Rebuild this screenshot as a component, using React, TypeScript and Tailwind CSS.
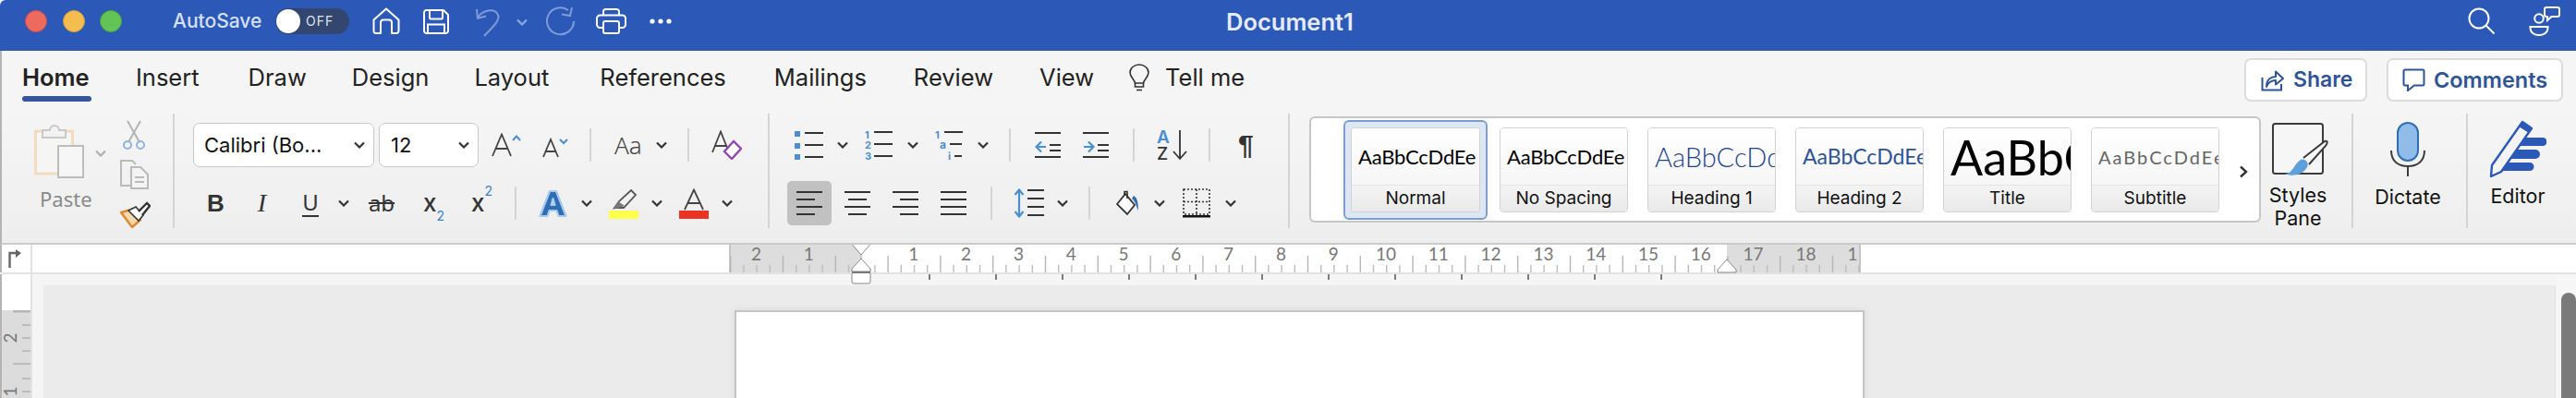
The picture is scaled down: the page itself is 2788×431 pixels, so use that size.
import React from "react";

const Chev = ({ className = "", color = "#333" }: { className?: string; color?: string }) => (
  <svg width="12" height="8" viewBox="0 0 12 8" className={`shrink-0 ${className}`}>
    <path d="M1 1.5 L6 6.5 L11 1.5" fill="none" stroke={color} strokeWidth="2.2" />
  </svg>
);

const Divider = ({ className = "" }: { className?: string }) => (
  <div className={`w-[2px] shrink-0 bg-[#d4d4d4] ${className}`} />
);

const Svg = ({ w, h, className = "", children }: { w: number; h: number; className?: string; children: React.ReactNode }) => (
  <svg width={w} height={h} viewBox={`0 0 ${w} ${h}`} className={`shrink-0 ${className}`} fill="none">
    {children}
  </svg>
);

const TitleBar = () => (
  <div className="h-[55px] shrink-0 bg-[#2c59b8] flex items-center relative rounded-tl-[6px] font-['Inter',sans-serif]">
    <div className="w-[24px] h-[24px] rounded-full bg-[#ee6a5f] border border-[#c9504a] ml-[27px] -mt-[9px]" />
    <div className="w-[24px] h-[24px] rounded-full bg-[#f5bd4f] border border-[#d19c3a] ml-[17px] -mt-[9px]" />
    <div className="w-[24px] h-[24px] rounded-full bg-[#61c454] border border-[#4ba43f] ml-[16px] -mt-[9px]" />
    <span className="ml-[55px] w-[99px] text-[21px] font-medium text-[#d6e0f5] whitespace-nowrap leading-[26px] -mt-[9px]">AutoSave</span>
    <div className="ml-[12px] w-[80px] h-[28px] rounded-full bg-[#33466f] flex items-center -mt-[9px]">
      <div className="w-[26px] h-[26px] rounded-full bg-white ml-[1px]" />
      <span className="ml-[6px] text-[14px] font-normal tracking-[1px] text-[#dfe4ee] leading-none">OFF</span>
    </div>
    <Svg w={30} h={30} className="ml-[25px] -mt-[9px]">
      <path d="M1.5 13.5 L15 1.5 L28.5 13.5 V25.5 a2.5 2.5 0 0 1-2.5 2.5 H21 V16.5 a3 3 0 0 0-3-3 h-6 a3 3 0 0 0-3 3 V28 H4 a2.5 2.5 0 0 1-2.5-2.5 Z" stroke="#fff" strokeWidth="2" strokeLinejoin="round" />
    </Svg>
    <Svg w={28} h={27} className="ml-[25px] -mt-[9px]">
      <path d="M3.5 1 H22 L27 6 V23.5 a2.5 2.5 0 0 1-2.5 2.5 H3.5 A2.5 2.5 0 0 1 1 23.5 V3.5 A2.5 2.5 0 0 1 3.5 1 Z" stroke="#fff" strokeWidth="2" />
      <path d="M7 1 V9 a1.5 1.5 0 0 0 1.5 1.5 H19.5 A1.5 1.5 0 0 0 21 9 V1" stroke="#fff" strokeWidth="2" />
      <path d="M5 26 V16.5 H23 V26" stroke="#fff" strokeWidth="2" />
    </Svg>
    <Svg w={28} h={32} className="ml-[28px] -mt-[8px]">
      <path d="M3 12 L2 2 M2 12 L12 9.5" stroke="#7f9bd7" strokeWidth="2" />
      <path d="M3 11 C8 3 21 0 25 8 C28 15 16 24 10 31" stroke="#7f9bd7" strokeWidth="2" />
    </Svg>
    <Chev color="#8fa8de" className="ml-[17px] -mt-[8px]" />
    <Svg w={34} h={32} className="ml-[19px] -mt-[9px]">
      <path d="M25 4 A14.5 14.5 0 1 0 31 16" stroke="#7f9bd7" strokeWidth="2" />
      <path d="M29 1 L27 10 L18 8.5" stroke="#7f9bd7" strokeWidth="2" />
    </Svg>
    <Svg w={33} h={28} className="ml-[21px] -mt-[9px]">
      <path d="M8 8 V3.5 A2.5 2.5 0 0 1 10.5 1 H22.5 A2.5 2.5 0 0 1 25 3.5 V8" stroke="#fff" strokeWidth="2" />
      <path d="M8 21 H4.5 A3.5 3.5 0 0 1 1 17.5 V11 A3.5 3.5 0 0 1 4.5 7.5 H28.5 A3.5 3.5 0 0 1 32 11 V17.5 A3.5 3.5 0 0 1 28.5 21 H25" stroke="#fff" strokeWidth="2" />
      <rect x="8" y="14" width="17" height="13" rx="2" stroke="#fff" strokeWidth="2" />
    </Svg>
    <Svg w={26} h={6} className="ml-[24px] -mt-[9px]">
      <circle cx="4" cy="3" r="2.6" fill="#fff" />
      <circle cx="13" cy="3" r="2.6" fill="#fff" />
      <circle cx="22" cy="3" r="2.6" fill="#fff" />
    </Svg>
    <span className="absolute left-[1327px] top-[8px] text-[25.5px] leading-[32px] font-semibold text-[#e5ebf8]">Document1</span>
    <div className="ml-auto flex items-center">
      <Svg w={30} h={30} className="-mt-[9px]">
        <circle cx="12" cy="12" r="10.5" stroke="#fff" strokeWidth="2" />
        <path d="M19.5 19.5 L28.5 28.5" stroke="#fff" strokeWidth="2" />
      </Svg>
      <Svg w={34} h={32} className="ml-[36px] mr-[17px] -mt-[9px]">
        <circle cx="11" cy="13" r="4.8" stroke="#fff" strokeWidth="2" />
        <path d="M1.5 22 H20.5 V23.5 A8.5 7.5 0 0 1 12 31 H10 A8.5 7.5 0 0 1 1.5 23.5 Z" stroke="#fff" strokeWidth="2" />
        <path d="M19 1 H31 A2 2 0 0 1 33 3 V9 A2 2 0 0 1 31 11 H24.5 L20 15 V11 H19 A2 2 0 0 1 17 9 V3 A2 2 0 0 1 19 1 Z" stroke="#fff" strokeWidth="2" />
      </Svg>
    </div>
  </div>
);

const Tab = ({ label, className = "", active = false }: { label: string; className?: string; active?: boolean }) => (
  <div className={`relative text-[25.5px] leading-[32px] whitespace-nowrap text-[#222] ${active ? "font-semibold" : "font-normal"} ${className}`}>
    {label}
    {active && <div className="absolute left-0 right-0 top-[36px] h-[6px] rounded-full bg-[#36569c]" />}
  </div>
);

const TabRow = () => (
  <div className="h-[67px] shrink-0 flex items-start bg-[#f5f5f5] font-['Inter',sans-serif] border-l-2 border-[#b4b4b4]">
    <div className="flex items-center mt-[13px] ml-[22px]">
      <Tab label="Home" active className="w-[75px]" />
      <Tab label="Insert" className="ml-[48px]" />
      <Tab label="Draw" className="ml-[53px]" />
      <Tab label="Design" className="ml-[49px]" />
      <Tab label="Layout" className="ml-[49px]" />
      <Tab label="References" className="ml-[55px]" />
      <Tab label="Mailings" className="ml-[52px]" />
      <Tab label="Review" className="ml-[51px]" />
      <Tab label="View" className="ml-[50px]" />
      <Svg w={24} h={31} className="ml-[37px]">
        <path d="M7.5 21 C7 17 2 14.5 2 9.5 A10 8.5 0 0 1 22 9.5 C22 14.5 17 17 16.5 21 Z" stroke="#333" strokeWidth="1.6" />
        <path d="M7.5 21 V25 H16.5 V21 M9 28.5 H15" stroke="#333" strokeWidth="1.6" />
      </Svg>
      <Tab label="Tell me" className="ml-[16px]" />
    </div>
    <div className="ml-auto flex mt-[8px] mr-[14px] text-[#2f5496]">
      <div className="w-[133px] h-[47px] rounded-[7px] border-2 border-[#dcdcdc] bg-white flex items-center">
        <Svg w={25} h={25} className="ml-[16px]">
          <path d="M1.5 10 V23.5 H22 V17" stroke="#2f5496" strokeWidth="2" />
          <path d="M6 20 C6 12 11 9 16 9 V3.5 L24 11 L16 17.5 V13 C12 13 8 15 6 20 Z" stroke="#2f5496" strokeWidth="2" strokeLinejoin="round" />
        </Svg>
        <span className="ml-[10px] text-[23px] font-semibold leading-none">Share</span>
      </div>
      <div className="ml-[21px] w-[191px] h-[47px] rounded-[7px] border-2 border-[#dcdcdc] bg-white flex items-center">
        <Svg w={25} h={25} className="ml-[15px]">
          <path d="M3 1.5 H22 A1.5 1.5 0 0 1 23.5 3 V17 A1.5 1.5 0 0 1 22 18.5 H13 L6 24 V18.5 H3 A1.5 1.5 0 0 1 1.5 17 V3 A1.5 1.5 0 0 1 3 1.5 Z" stroke="#2f5496" strokeWidth="2" />
        </Svg>
        <span className="ml-[9px] text-[23.5px] font-semibold leading-none">Comments</span>
      </div>
    </div>
  </div>
);

const Lines = ({ kind, className = "" }: { kind: "left" | "center" | "right" | "just"; className?: string }) => {
  const rows: [number, number][] =
    kind === "left"
      ? [[0, 28], [0, 20], [0, 28], [0, 20]]
      : kind === "center"
      ? [[0, 28], [4, 24], [0, 28], [4, 24]]
      : kind === "right"
      ? [[0, 28], [8, 28], [0, 28], [8, 28]]
      : [[0, 28], [0, 28], [0, 28], [0, 28]];
  return (
    <Svg w={28} h={28} className={className}>
      {rows.map(([a, b], i) => (
        <rect key={i} x={a} y={1 + i * 8} width={b - a} height="2" fill="#333" />
      ))}
    </Svg>
  );
};

const Clipboard = () => (
  <div className="w-[185px] h-[124px] shrink-0 flex relative">
    <div className="w-[117px] shrink-0">
      <div className="h-[61px] mt-[10px] flex">
        <Svg w={56} h={62} className="ml-[35px]">
          <rect x="1.5" y="9" width="40" height="46" fill="#f5f5f4" stroke="#f2dcc0" strokeWidth="3" />
          <path d="M9 16 V8 H17 A5 5 0 0 1 27 8 H34 V16 Z" fill="#f2f2f2" stroke="#c9c9c9" strokeWidth="2" />
          <rect x="26" y="25" width="27" height="34" fill="#f6f6f6" stroke="#bdbdbd" strokeWidth="2" />
        </Svg>
        <Chev color="#b0b0b0" className="ml-[10px] mt-[29px]" />
      </div>
      <div className="mt-[7px] ml-[41px] text-[22px] leading-[28px] text-[#8a8a8a]">Paste</div>
    </div>
    <div className="ml-[10px] flex flex-col items-start">
      <Svg w={26} h={32} className="mt-[7px] ml-[3px]">
        <path d="M6 1 L19 24 M20 1 L7 24" stroke="#b4b4b4" strokeWidth="2" />
        <circle cx="6" cy="27" r="4" stroke="#8fb5de" strokeWidth="2" />
        <circle cx="20" cy="27" r="4" stroke="#8fb5de" strokeWidth="2" />
      </Svg>
      <Svg w={32} h={33} className="mt-[10px]">
        <path d="M12 29 H2 V2 H14 L18 6" stroke="#bababa" strokeWidth="2" />
        <path d="M13 9 H23 L31 17 V32 H13 Z" fill="#f4f4f4" stroke="#bababa" strokeWidth="2" />
        <path d="M17 20 H27 M17 25 H27" stroke="#bababa" strokeWidth="2" />
      </Svg>
      <Svg w={34} h={32} className="mt-[11px]">
        <path d="M2 14 L17 10 L23 22 L14 30 Z" fill="#f5d9ae" stroke="#e08a33" strokeWidth="2.5" strokeLinejoin="round" />
        <path d="M10 12 L21 23 L26 17 L18 8 Z" fill="#fff" stroke="#333" strokeWidth="1.6" />
        <path d="M21 13 L30 4 L33 7 L25 17" fill="#fff" stroke="#333" strokeWidth="2.4" />
      </Svg>
    </div>
  </div>
);

const FontGroup = () => (
  <div className="w-[622px] shrink-0 pt-[10px] ml-[20px] font-['Inter',sans-serif] text-[#222]">
    <div className="h-[48px] flex items-center">
      <div className="w-[196px] h-[48px] rounded-[7px] border border-[#c9c9c9] bg-white flex items-center pl-[11px] pr-[9px]">
        <span className="text-[22px] whitespace-nowrap text-[#111]">Calibri (Bo...</span>
        <Chev className="ml-auto" />
      </div>
      <div className="ml-[5px] w-[108px] h-[48px] rounded-[7px] border border-[#c9c9c9] bg-white flex items-center pl-[12px] pr-[9px]">
        <span className="text-[22px] text-[#111]">12</span>
        <Chev className="ml-auto" />
      </div>
      <Svg w={32} h={26} className="ml-[14px]">
        <path d="M1 25 L11 1.5 L21 25 M4.5 17 H17.5" stroke="#444" strokeWidth="1.8" />
        <path d="M23 8 L27 3.5 L31 8" stroke="#4a8fd0" strokeWidth="2" />
      </Svg>
      <Svg w={28} h={22} className="ml-[23px] mt-[5px]">
        <path d="M1 21 L9 2 L17 21 M4 15 H14" stroke="#444" strokeWidth="1.8" />
        <path d="M19 2 L23 6 L27 2" stroke="#4a8fd0" strokeWidth="2" />
      </Svg>
      <Divider className="ml-[23px] h-[36px]" />
      <span className="ml-[25px] w-[33px] text-[26px] font-light text-[#444] whitespace-nowrap leading-[32px] font-['Noto_Sans',sans-serif]">Aa</span>
      <Chev className="ml-[12px]" />
      <Divider className="ml-[22px] h-[36px]" />
      <Svg w={33} h={32} className="ml-[24px]">
        <path d="M1 24 L10 1.5 L19 24 M4 17 H16" stroke="#444" strokeWidth="1.8" />
        <path d="M14 23 L24 12 L32 20 L22 31 Z" fill="#fff" stroke="#8f4aae" strokeWidth="2.4" />
      </Svg>
    </div>
    <div className="h-[48px] mt-[15px] flex items-center text-[#333]">
      <span className="ml-[15px] w-[17px] text-[26px] font-bold leading-[32px] font-['Liberation_Sans',sans-serif]">B</span>
      <span className="ml-[35px] w-[15px] text-[28px] italic leading-[32px] text-center font-['Liberation_Serif',serif]">I</span>
      <span className="ml-[36px] w-[18px] text-[24px] leading-[28px] border-b-2 border-[#333] text-center font-['Noto_Sans',sans-serif]">U</span>
      <Chev className="ml-[21px]" />
      <span className="ml-[19px] w-[32px] text-[24px] leading-[30px] text-center line-through font-['Noto_Sans',sans-serif]">ab</span>
      <span className="ml-[29px] w-[22px] text-[26px] font-medium leading-[30px] whitespace-nowrap">x<sub className="text-[14px] font-normal text-[#3b82c4] align-sub">2</sub></span>
      <span className="ml-[30px] w-[22px] text-[26px] font-medium leading-[30px] whitespace-nowrap">x<sup className="text-[14px] font-normal text-[#3b82c4] align-super">2</sup></span>
      <Divider className="ml-[25px] h-[36px]" />
      <Svg w={31} h={31} className="ml-[24px]">
        <path d="M1.5 29 L12 2 H19 L29.5 29 H21.5 L19.5 23 H11.5 L9.5 29 Z M13.5 17 H17.5 L15.5 10 Z" fill="#2f6db5" stroke="#a7caea" strokeWidth="2.2" strokeLinejoin="round" />
      </Svg>
      <Chev className="ml-[15px]" />
      <div className="ml-[18px] w-[32px] flex flex-col items-center">
        <Svg w={30} h={24}>
          <path d="M5 21 H15 L28 7 L23 2 L10 14 Z" fill="#f2f2f2" stroke="#555" strokeWidth="1.8" />
          <path d="M3 23 L9 14 L16 19 Z" fill="#777" />
        </Svg>
        <div className="w-[32px] h-[9px] bg-[#ffff4d]" />
      </div>
      <Chev className="ml-[14px]" />
      <div className="ml-[18px] w-[32px] flex flex-col items-center">
        <Svg w={24} h={24}>
          <path d="M2 23 L12 1.5 L22 23 M6 16 H18" stroke="#444" strokeWidth="1.8" />
        </Svg>
        <div className="w-[32px] h-[9px] bg-[#e93323]" />
      </div>
      <Chev className="ml-[14px]" />
    </div>
  </div>
);

const ListBar = ({ y, x = 10, w = 20 }: { y: number; x?: number; w?: number }) => <rect x={x} y={y} width={w} height="2" fill="#333" />;

const NumText = ({ x, y, t, s = 11 }: { x: number; y: number; t: string; s?: number }) => (
  <text x={x} y={y} fontSize={s} fontWeight="700" fontFamily="Inter, sans-serif" fill="#4a8fd0">{t}</text>
);

const ParagraphGroup = () => (
  <div className="w-[561px] shrink-0 pt-[10px] text-[#333]">
    <div className="h-[48px] flex items-center">
      <Svg w={31} h={32} className="ml-[27px]">
        <rect x="0" y="1" width="6" height="6" fill="#4a8fd0" />
        <rect x="0" y="14" width="6" height="6" fill="#4a8fd0" />
        <rect x="0" y="26" width="6" height="6" fill="#4a8fd0" />
        <ListBar y={2} x={11} />
        <ListBar y={15} x={11} />
        <ListBar y={28} x={11} />
      </Svg>
      <Chev className="ml-[15px]" />
      <Svg w={30} h={34} className="ml-[18px]">
        <NumText x={0} y={10} t="1" />
        <NumText x={0} y={21} t="2" />
        <NumText x={0} y={33} t="3" />
        <ListBar y={2} x={10} />
        <ListBar y={15} x={10} />
        <ListBar y={28} x={10} />
      </Svg>
      <Chev className="ml-[16px]" />
      <Svg w={30} h={34} className="ml-[18px]">
        <NumText x={0} y={10} t="1" />
        <NumText x={5} y={21} t="a" s={12} />
        <NumText x={14} y={33} t="i" />
        <ListBar y={2} x={10} />
        <ListBar y={15} x={16} w={13} />
        <ListBar y={28} x={21} w={8} />
      </Svg>
      <Chev className="ml-[16px]" />
      <Divider className="ml-[22px] h-[36px]" />
      <Svg w={28} h={30} className="ml-[26px]">
        <rect x="0" y="1" width="28" height="2" fill="#333" />
        <rect x="16" y="14" width="12" height="2" fill="#333" />
        <rect x="16" y="20" width="12" height="2" fill="#333" />
        <rect x="0" y="27" width="28" height="2" fill="#333" />
        <path d="M12 18 H2 M7 12.5 L1.5 18 L7 23.5" stroke="#4a8fd0" strokeWidth="2.2" transform="translate(0 -1)" />
      </Svg>
      <Svg w={28} h={30} className="ml-[24px]">
        <rect x="0" y="1" width="28" height="2" fill="#333" />
        <rect x="16" y="14" width="12" height="2" fill="#333" />
        <rect x="16" y="20" width="12" height="2" fill="#333" />
        <rect x="0" y="27" width="28" height="2" fill="#333" />
        <path d="M1 18 H11 M6 12.5 L11.5 18 L6 23.5" stroke="#4a8fd0" strokeWidth="2.2" transform="translate(0 -1)" />
      </Svg>
      <Divider className="ml-[26px] h-[36px]" />
      <Svg w={33} h={34} className="ml-[24px]">
        <text x="0" y="15" fontSize="19" fontWeight="600" fontFamily="Inter, sans-serif" fill="#4a8fd0">A</text>
        <text x="0" y="33" fontSize="19" fontWeight="500" fontFamily="Inter, sans-serif" fill="#333">Z</text>
        <path d="M25 1 V31 M18 24 L25 32 L32 24" stroke="#333" strokeWidth="1.8" />
      </Svg>
      <Divider className="ml-[23px] h-[36px]" />
      <span className="ml-[30px] w-[20px] text-[30px] font-bold leading-[36px] font-['Liberation_Sans',sans-serif] text-[#333]">¶</span>
    </div>
    <div className="h-[48px] mt-[15px] flex items-center">
      <div className="ml-[19px] w-[48px] h-[48px] rounded-[5px] bg-[#c1c1c1] flex items-center justify-center">
        <Lines kind="left" />
      </div>
      <Lines kind="center" className="ml-[14px]" />
      <Lines kind="right" className="ml-[24px]" />
      <Lines kind="just" className="ml-[24px]" />
      <Divider className="ml-[26px] h-[36px]" />
      <Svg w={32} h={32} className="ml-[24px]">
        <path d="M5 16 V1.5 M0.5 7 L5 1.5 L9.5 7 M5 16 V30.5 M0.5 25 L5 30.5 L9.5 25" stroke="#4a8fd0" strokeWidth="2.2" />
        <rect x="14" y="1" width="18" height="2" fill="#333" />
        <rect x="14" y="10" width="18" height="2" fill="#333" />
        <rect x="14" y="19" width="18" height="2" fill="#333" />
        <rect x="14" y="28" width="18" height="2" fill="#333" />
      </Svg>
      <Chev className="ml-[14px]" />
      <Divider className="ml-[22px] h-[36px]" />
      <Svg w={25} h={28} className="ml-[28px]">
        <path d="M1 15 L10 4 L20 16 L12 26 Z" fill="#fff" stroke="#333" strokeWidth="1.8" />
        <path d="M9 5 V1.5 H12 V9" stroke="#333" strokeWidth="1.6" />
        <path d="M19 6 C23 8 24 14 24 22 C22 18 21 12 17 9 Z" fill="#2f6db5" />
      </Svg>
      <Chev className="ml-[16px]" />
      <Svg w={30} h={32} className="ml-[19px]">
        <rect x="1" y="1" width="28" height="27" stroke="#333" strokeWidth="1.6" strokeDasharray="2 2" />
        <path d="M15 1 V28 M1 14.5 H29" stroke="#333" strokeWidth="1.6" strokeDasharray="2 2" />
        <rect x="0" y="29" width="30" height="2.5" fill="#111" />
      </Svg>
      <Chev className="ml-[16px]" />
    </div>
  </div>
);

const StyleCard = ({ label, children, selected = false }: { label: string; children: React.ReactNode; selected?: boolean }) => (
  <div className={selected ? "w-[156px] h-[108px] shrink-0 rounded-[6px] border-2 border-[#7f9ccf] bg-[#dde6f3] p-[6px] mr-[13px]" : "w-[139px] h-[92px] shrink-0 ml-0 mr-[21px] mt-[8px]"}>
    <div className={`${selected ? "w-[140px] h-[92px]" : "w-[139px] h-[92px]"} rounded-[4px] border border-[#d2d2d2] flex flex-col overflow-hidden`}>
      <div className="h-[61px] shrink-0 bg-gradient-to-b from-white to-[#f6f6f6] overflow-hidden flex items-center pl-[7px] pr-[3px] whitespace-nowrap font-['Lato',sans-serif]">
        {children}
      </div>
      <div className="flex-1 bg-gradient-to-b from-[#f4f4f4] to-[#e9e9e9] border-t border-[#e4e4e4] text-center text-[19px] leading-[28px] text-[#111] font-['Inter',sans-serif]">
        {label}
      </div>
    </div>
  </div>
);

const Gallery = () => (
  <div className="ml-[21px] mt-[3px] w-[1030px] h-[115px] shrink-0 rounded-[6px] border-2 border-[#c6c6c6] bg-white flex items-start pl-[35px] pt-[2px] relative">
    <StyleCard label="Normal" selected>
      <span className="text-[22px] text-black tracking-[-0.2px]">AaBbCcDdEe</span>
    </StyleCard>
    <StyleCard label="No Spacing">
      <span className="text-[22px] text-black tracking-[-0.2px]">AaBbCcDdEe</span>
    </StyleCard>
    <StyleCard label="Heading 1">
      <span className="text-[29px] font-light text-[#1f4590]">AaBbCcDd</span>
    </StyleCard>
    <StyleCard label="Heading 2">
      <span className="text-[23px] text-[#2f5496]">AaBbCcDdEe</span>
    </StyleCard>
    <StyleCard label="Title">
      <span className="text-[52px] text-black leading-none">AaBbCc</span>
    </StyleCard>
    <StyleCard label="Subtitle">
      <span className="text-[20px] text-[#666] tracking-[2px]">AaBbCcDdEe</span>
    </StyleCard>
    <Svg w={12} h={14} className="-ml-[1px] mt-[49px]">
      <path d="M3 1.5 L9 7 L3 12.5" stroke="#333" strokeWidth="2.4" />
    </Svg>
  </div>
);

const RightTools = () => (
  <div className="flex shrink-0 text-[21.5px] leading-[25px] text-[#111] font-['Inter',sans-serif]">
    <div className="w-[80px] flex flex-col items-center mr-[18px]">
      <Svg w={62} h={60} className="mt-[10px] ml-[6px]">
        <rect x="1" y="1" width="54" height="54" rx="2.5" stroke="#3b3b3b" strokeWidth="2" fill="#f6f6f6" />
        <path d="M34 38 L57 20 C61 19 60 22 58 25 L40 45" fill="#f6f6f6" stroke="#3b3b3b" strokeWidth="2" />
        <path d="M14 55 C22 56 24 44 31 40 C35 38 41 43 38 48 C34 56 22 59 14 55 Z" fill="#5f9fdc" />
      </Svg>
      <div className="mt-[6px] text-center">Styles<br />Pane</div>
    </div>
    <Divider className="h-[124px]" />
    <div className="w-[122px] flex flex-col items-center">
      <Svg w={38} h={62} className="mt-[8px] -ml-[4px]">
        <rect x="8" y="2" width="22" height="41" rx="11" fill="#8fbce8" stroke="#2f6db5" strokeWidth="2" />
        <path d="M1 32 C1 44 9 49 19 49 C29 49 37 44 37 32" stroke="#3b3b3b" strokeWidth="2" />
        <path d="M19 49 V60" stroke="#3b3b3b" strokeWidth="2" />
      </Svg>
      <div className="mt-[8px] text-center -ml-[4px]">Dictate</div>
    </div>
    <Divider className="h-[124px]" />
    <div className="w-[108px] flex flex-col items-center">
      <Svg w={62} h={62} className="mt-[7px]">
        <path d="M32 19 H58 A4 4 0 0 1 58 28 H25 Z M26 32 H50 A4 4 0 0 1 50 42 H19 Z M18 46 H44 A4 4 0 0 1 44 55 H12 Z" fill="#2c59b8" />
        <path d="M36 2 L46 9 L13 56 L2 61 L3 49 Z" fill="#f4f4f4" stroke="#2c59b8" strokeWidth="2.4" strokeLinejoin="round" />
        <path d="M36 1 L47 9 L43 14 L32 7 Z" fill="#2c59b8" />
      </Svg>
      <div className="mt-[8px] text-center">Editor</div>
    </div>
  </div>
);

const Ribbon = () => (
  <div className="h-[143px] shrink-0 flex items-start pt-[1px] bg-gradient-to-b from-[#f5f5f5] to-[#eeeeee] border-l-2 border-b-2 border-[#b4b4b4] border-b-[#cbcbcb]">
    <Clipboard />
    <Divider className="h-[124px]" />
    <FontGroup />
    <Divider className="h-[124px]" />
    <ParagraphGroup />
    <Divider className="h-[124px]" />
    <Gallery />
    <RightTools />
  </div>
);

const HRuler = () => {
  const origin = 143;
  const unit = 56.8;
  const ticks: React.ReactNode[] = [];
  for (let i = -10; i <= 76; i++) {
    if (i === 0) continue;
    const x = origin + (i * unit) / 4;
    const tall = ((i % 4) + 4) % 4 === 2;
    ticks.push(
      <rect key={i} x={x} y={tall ? 12 : 22} width="1.4" height={tall ? 18 : 8} fill={tall ? "#b6b6b6" : "#bcbcbc"} />
    );
  }
  const nums = [-2, -1, 1, 2, 3, 4, 5, 6, 7, 8, 9, 10, 11, 12, 13, 14, 15, 16, 17, 18, 19];
  return (
    <svg width="1240" height="44" viewBox="0 0 1240 44" className="shrink-0 ml-[754px]" fill="none">
      <rect x="0" y="0" width="143" height="30" fill="#dddddd" />
      <rect x="1080" y="0" width="145" height="30" fill="#dddddd" />
      <rect x="0" y="0" width="2" height="30" fill="#c4c4c4" />
      <rect x="1223" y="0" width="2" height="30" fill="#c4c4c4" />
      {ticks}
      {nums.map((n) => {
        const x = origin + n * unit;
        const label = n === 19 ? "1" : String(Math.abs(n));
        return (
          <text key={n} x={n === 19 ? 1216 : x} y="17" fontSize="19" textAnchor="middle" fontFamily="Lato, sans-serif" fill="#777">
            {label}
          </text>
        );
      })}
      {[0, 1, 2, 3, 4, 5, 6, 7, 8, 9, 10, 11].map((i) => (
        <rect key={i} x={216 + i * 72} y="32" width="2" height="6" fill="#7c7c7c" />
      ))}
      <path d="M133.5 0 L143 11 L152.5 0" fill="#fff" stroke="#888" strokeWidth="1" />
      <path d="M143 11 V15" stroke="#bbb" strokeWidth="1.4" />
      <path d="M143 15 L153 26 V29 H133 V26 Z" fill="#fff" stroke="#888" strokeWidth="1" />
      <rect x="133" y="30" width="20" height="12" rx="2" fill="#fff" stroke="#888" strokeWidth="1" />
      <rect x="133" y="29" width="20" height="2" fill="#777" />
      <path d="M1080 16 L1090 27 V30 H1070 V27 Z" fill="#fff" stroke="#888" strokeWidth="1" />
    </svg>
  );
};

const VRuler = () => (
  <svg width="31" height="95" viewBox="0 0 31 95" className="shrink-0" fill="none">
    <rect x="0" y="0" width="31" height="95" fill="#dcdcdc" />
    <rect x="12" y="0" width="19" height="2.4" fill="#b4b4b4" />
    <rect x="22" y="15" width="9" height="2" fill="#bbb" />
    <rect x="22" y="29" width="9" height="2" fill="#bbb" />
    <rect x="22" y="43" width="9" height="2" fill="#bbb" />
    <rect x="12" y="57" width="19" height="2" fill="#bbb" />
    <rect x="22" y="73" width="9" height="2" fill="#bbb" />
    <rect x="22" y="87" width="9" height="2" fill="#bbb" />
    <text x="0" y="0" fontSize="19" textAnchor="middle" fontFamily="Lato, sans-serif" fill="#777" transform="translate(16 30) rotate(-90)">2</text>
    <text x="0" y="0" fontSize="19" textAnchor="middle" fontFamily="Lato, sans-serif" fill="#777" transform="translate(16 88) rotate(-90)">1</text>
  </svg>
);

const Document = () => (
  <div className="flex-1 flex min-h-0 border-l-2 border-[#b4b4b4] bg-[#f5f5f5]">
    <div className="w-[31px] shrink-0 flex flex-col bg-white overflow-hidden">
      <div className="h-[39px] shrink-0" />
      <VRuler />
    </div>
    <div className="flex-1 flex flex-col border-l-2 border-[#e2e2e2] min-w-0">
      <div className="h-[2px]" />
      <div className="flex-1 flex flex-col pl-[12px] pr-0 min-h-0">
        <div className="flex-1 flex min-h-0">
          <div className="flex-1 mt-[10px] bg-[#ebebeb] border-r border-[#e2e2e2] pt-[27px] pl-[748px] min-w-0">
            <div className="w-[1223px] h-[200px] bg-white border-2 border-[#c4c4c4] shadow-[0_0_8px_rgba(0,0,0,0.08)]" />
          </div>
          <div className="w-[22px] shrink-0 bg-[#f6f6f6] pl-[6px] pt-[16px]">
            <div className="w-[16px] h-[200px] rounded-t-full bg-[#7a7a7a] mt-[2px]" />
          </div>
        </div>
      </div>
    </div>
  </div>
);

const RulerRow = () => (
  <div className="h-[30px] shrink-0 flex bg-white border-l-2 border-[#b4b4b4] relative z-10">
    <div className="w-[31px] shrink-0 flex items-start justify-center pt-[5px] border-r-2 border-[#e2e2e2] box-content">
      <Svg w={14} h={20} className="mr-[3px]">
        <path d="M1.5 20 V4 H9" stroke="#666" strokeWidth="2.4" />
        <path d="M8 0 L14 4 L8 9 Z" fill="#666" />
      </Svg>
    </div>
    <div className="flex-1 h-[44px] overflow-visible">
      <HRuler />
    </div>
  </div>
);

export default function App() {
  return (
    <div className="w-[2788px] h-[431px] overflow-hidden flex flex-col bg-white">
      <TitleBar />
      <TabRow />
      <Ribbon />
      <RulerRow />
      <div className="h-[2px] shrink-0 bg-[#e2e2e2] ml-[2px]" />
      <Document />
    </div>
  );
}
